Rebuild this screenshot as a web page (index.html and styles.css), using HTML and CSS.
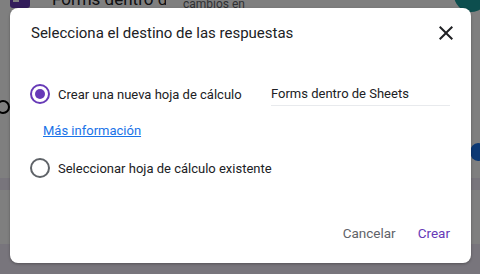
FILE: index.html
```html
<!DOCTYPE html>
<html lang="es">
<head>
<meta charset="utf-8">
<title>Forms dentro de Sheets</title>
<link rel="stylesheet" href="styles.css">
</head>
<body>
<div class="page">
  <header class="topbar">
    <div class="app-icon"><span class="app-line"></span></div>
    <div class="doc-title">Forms dentro de Sheets</div>
    <div class="save-note">cambios en</div>
    <div class="avatar"></div>
  </header>
  <section class="card card-main">
    <div class="bg-radio"></div>
    <div class="bg-fab"></div>
  </section>
  <div class="gap"></div>
  <section class="card card-second"></section>
</div>
<div class="scrim"></div>
<div class="dialog" role="dialog">
  <div class="dlg-head">
    <h2 class="dlg-title">Selecciona el destino de las respuestas</h2>
    <button class="close" aria-label="Cerrar">
      <svg width="24" height="24" viewBox="0 0 24 24"><path d="M19 6.41 17.59 5 12 10.59 6.41 5 5 6.41 10.59 12 5 17.59 6.41 19 12 13.41 17.59 19 19 17.59 13.41 12z" fill="#202124"/></svg>
    </button>
  </div>
  <div class="dlg-body">
    <div class="opt-row">
      <span class="radio checked"><span class="dot"></span></span>
      <span class="opt-label">Crear una nueva hoja de cálculo</span>
      <div class="name-field">Forms dentro de Sheets</div>
    </div>
    <a class="more-link" href="#">Más información</a>
    <div class="opt-row second">
      <span class="radio"></span>
      <span class="opt-label">Seleccionar hoja de cálculo existente</span>
    </div>
  </div>
  <div class="dlg-foot">
    <button class="btn cancel">Cancelar</button>
    <button class="btn create">Crear</button>
  </div>
</div>
</body>
</html>
```
FILE: styles.css
```css
* { box-sizing: border-box; }
html, body { margin: 0; padding: 0; }
body {
  width: 480px;
  height: 274px;
  overflow: hidden;
  background: #f0ebf8;
  font-family: Roboto, "Liberation Sans", Arial, sans-serif;
  position: relative;
}
.page { display: flex; flex-direction: column; }
.topbar {
  display: flex;
  align-items: flex-start;
  height: 30px;
  background: #fff;
  position: relative;
}
.app-icon {
  width: 20px;
  height: 26px;
  margin: -18px 0 0 10px;
  background: #673ab7;
  border-radius: 3px;
  position: relative;
}
.app-line {
  position: absolute;
  left: 3px;
  bottom: 6px;
  width: 6px;
  height: 2px;
  background: #fff;
}
.doc-title {
  margin: -12px 0 0 22px;
  width: 114px;
  overflow: hidden;
  font-size: 17px;
  line-height: 22px;
  color: #202124;
  white-space: nowrap;
}
.save-note {
  position: absolute;
  left: 183px;
  top: -3px;
  font-size: 12px;
  line-height: 14px;
  color: #5f6368;
}
.avatar {
  position: absolute;
  right: -8px;
  top: -22px;
  width: 34px;
  height: 34px;
  border-radius: 50%;
  background: #1b9c9c;
}
.card { background: #fff; position: relative; }
.card-main { height: 148px; }
.bg-radio {
  position: absolute;
  left: -4px;
  top: 70px;
  width: 14px;
  height: 14px;
  border: 2px solid #000;
  border-radius: 50%;
}
.bg-fab {
  position: absolute;
  right: -6px;
  top: 113px;
  width: 16px;
  height: 18px;
  border-radius: 50%;
  background: #1a73e8;
}
.gap { height: 12px; }
.card-second { height: 54px; }
.scrim {
  position: absolute;
  inset: 0;
  background: rgba(0, 0, 0, 0.5);
}
.dialog {
  position: absolute;
  left: 10px;
  top: 8px;
  width: 461px;
  height: 255px;
  background: #fff;
  border-radius: 8px;
  display: flex;
  flex-direction: column;
  box-shadow: 0 1px 3px rgba(0,0,0,0.3);
}
.dlg-head {
  height: 50px;
  display: flex;
  align-items: center;
  justify-content: space-between;
  padding: 0 13px 0 21px;
}
.dlg-title {
  margin: 0;
  font-size: 15px;
  font-weight: 400;
  line-height: 24px;
  color: #202124;
}
.close {
  width: 24px;
  height: 24px;
  padding: 0;
  border: 0;
  background: none;
  display: flex;
}
.dlg-body {
  display: flex;
  flex-direction: column;
  align-items: flex-start;
  padding: 0 0 0 20px;
}
.opt-row {
  display: flex;
  align-items: center;
  height: 24px;
  margin-top: 24px;
  width: 100%;
}
.opt-row.second { margin-top: 15px; }
.radio {
  width: 20px;
  height: 20px;
  border: 2px solid #5f6368;
  border-radius: 50%;
  display: flex;
  align-items: center;
  justify-content: center;
  flex: none;
}
.radio.checked { border-color: #673ab7; }
.dot {
  width: 10px;
  height: 10px;
  border-radius: 50%;
  background: #673ab7;
}
.opt-label {
  margin-left: 8px;
  font-size: 13px;
  color: #202124;
  white-space: nowrap;
}
.name-field {
  margin-left: auto;
  margin-right: 21px;
  width: 179px;
  font-size: 13px;
  color: #202124;
  line-height: 22px;
  border-bottom: 1px solid #e8eaed;
  white-space: nowrap;
}
.more-link {
  margin: 15px 0 0 13px;
  font-size: 13px;
  line-height: 20px;
  color: #1a73e8;
  text-decoration: underline;
}
.dlg-foot {
  margin-top: auto;
  display: flex;
  justify-content: flex-end;
  gap: 6px;
  padding: 0 13px 12px 0;
}
.btn {
  height: 36px;
  padding: 0 8px;
  border: 0;
  background: none;
  font-family: Roboto, "Liberation Sans", Arial, sans-serif;
  font-size: 13.5px;
  font-weight: 400;
}
.cancel { color: #5f6368; }
.create { color: #673ab7; }
```
